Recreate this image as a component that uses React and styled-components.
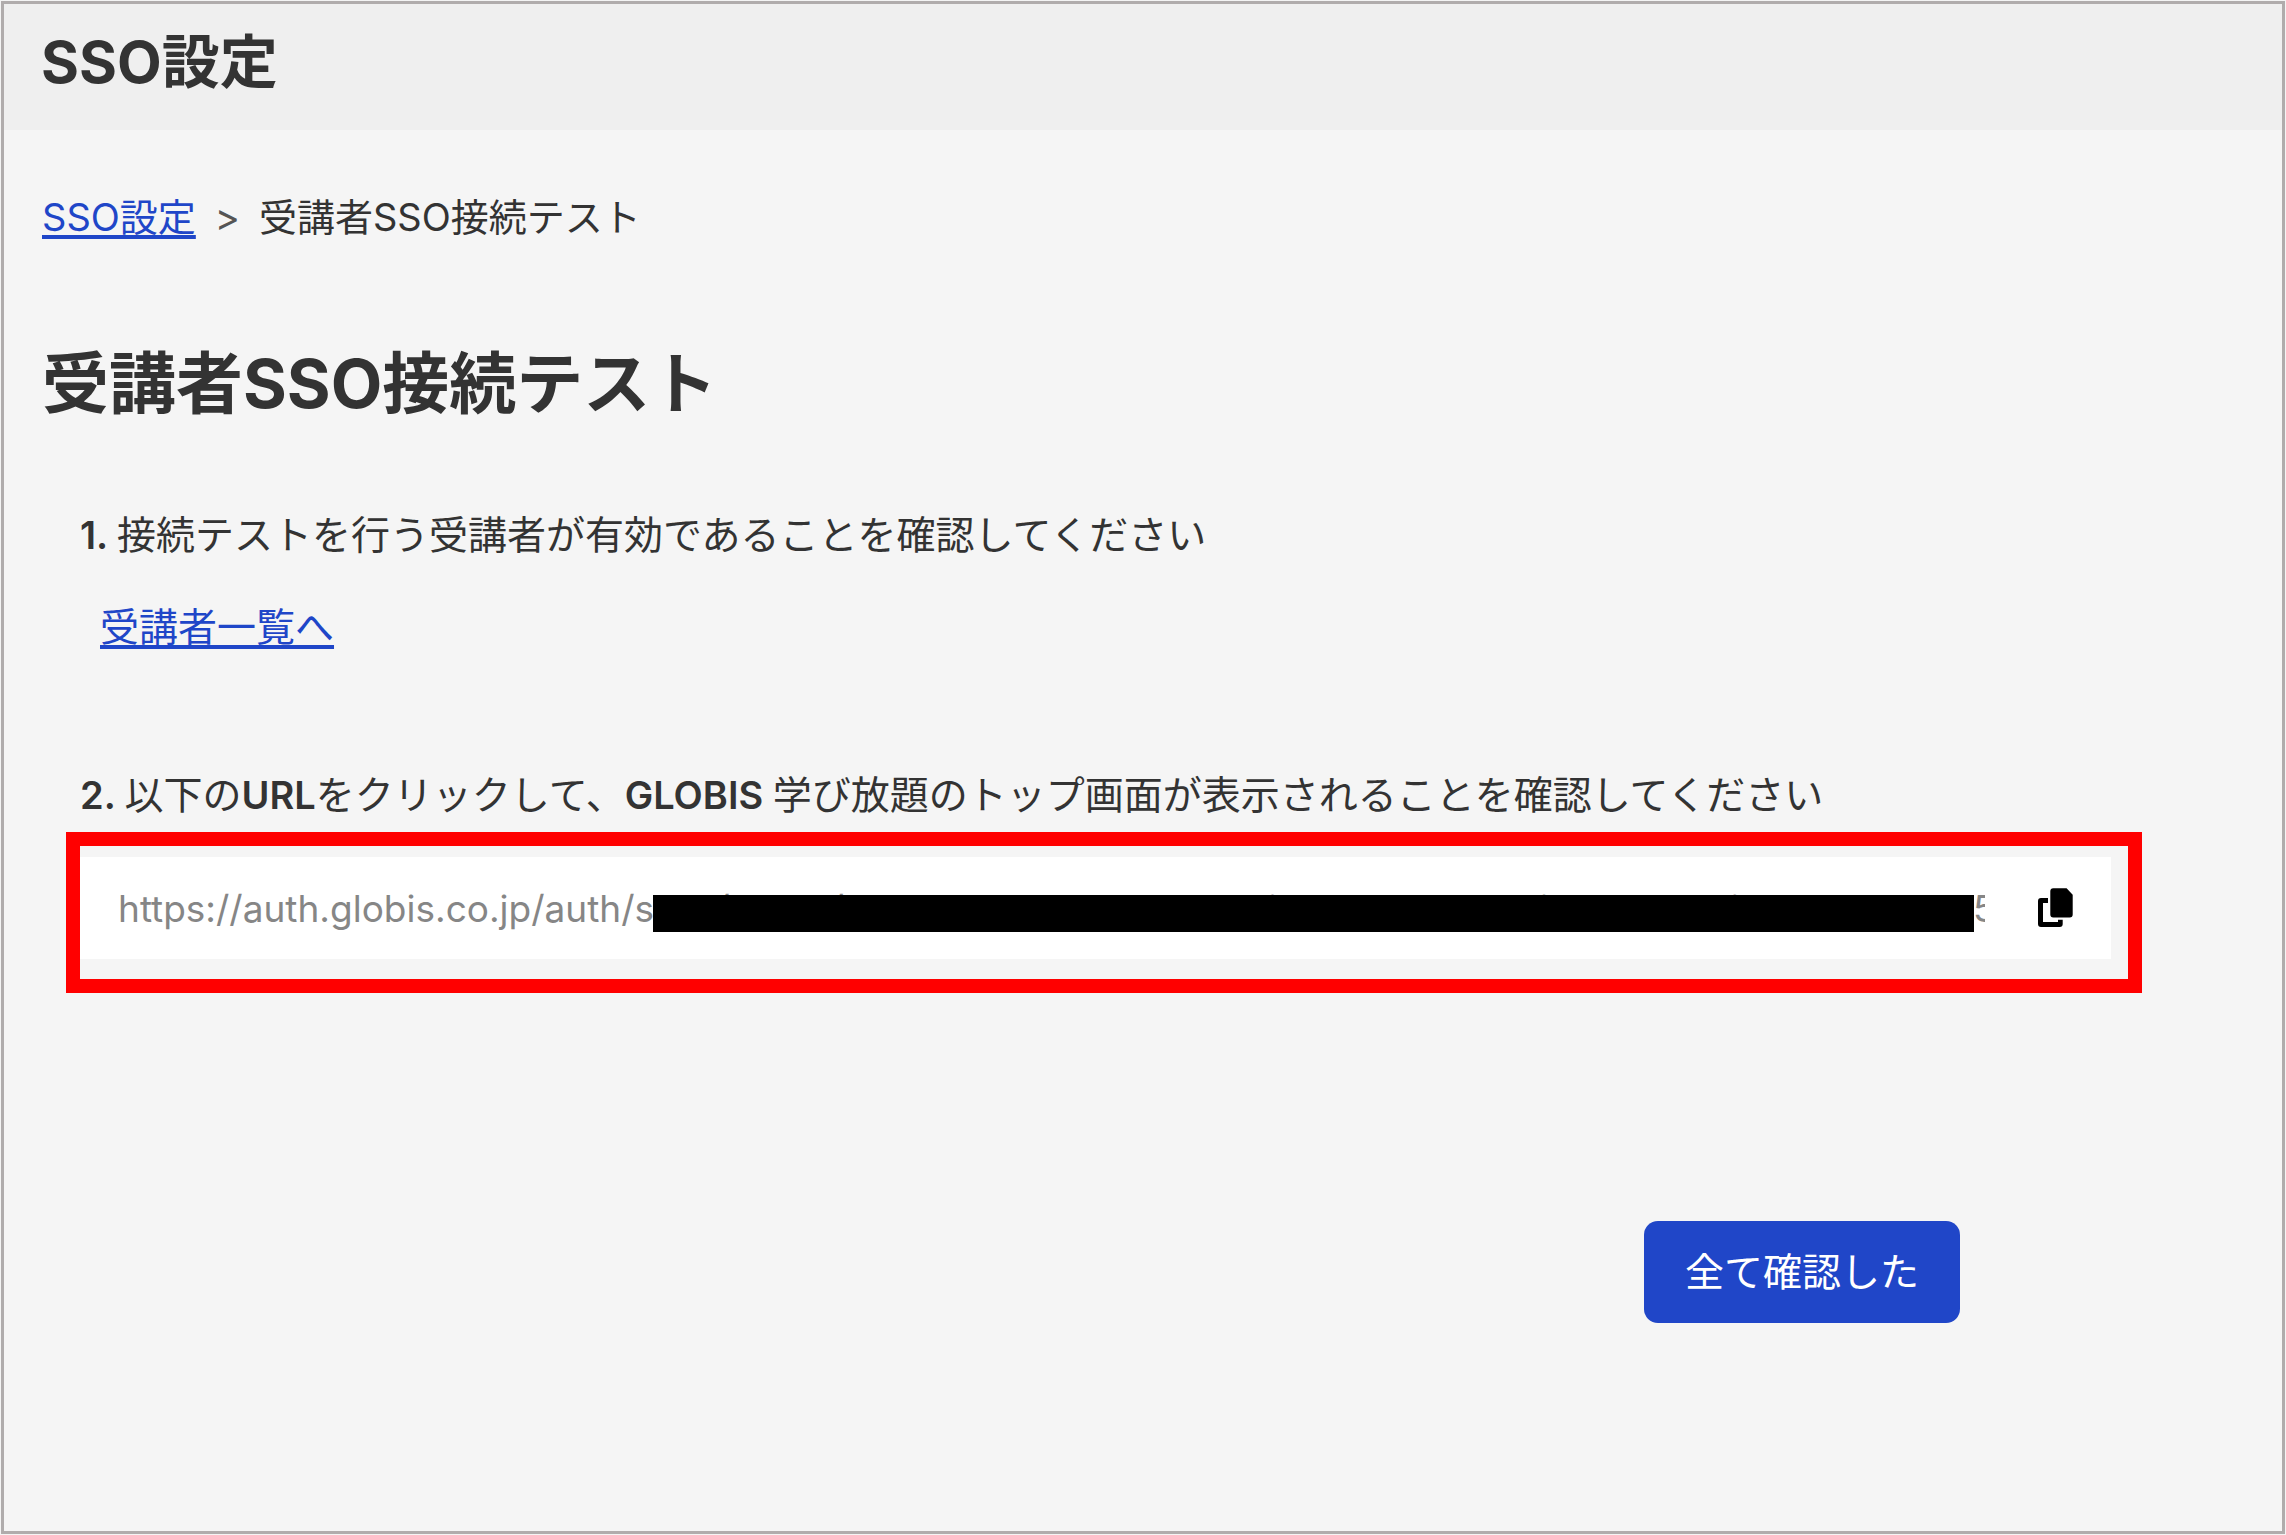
import React from 'react'
import styled, { createGlobalStyle } from 'styled-components'

const GlobalStyle = createGlobalStyle`
  * {
    box-sizing: border-box;
  }

  body {
    margin: 0;
    background: #f4f4f4;
    color: #333;
    font-family: Inter, 'Noto Sans CJK JP', sans-serif;
    font-size: 39px;
    line-height: 58px;
  }
`

const Page = styled('div')`
  min-height: 100vh;
  padding: 1px;
  display: flex;
`

const Frame = styled('div')`
  flex: 1;
  min-width: 0;
  border: 3px solid #b0acac;
  background: #f5f5f5;
`

const Header = styled('header')`
  padding: 16px 37px 26px;
  background: #efefef;
  font-size: 58px;
  font-weight: 700;
  line-height: 84px;
`

const Main = styled('main')`
  padding: 58px 38px;
`

const Breadcrumb = styled('nav')`
  display: flex;
  gap: 19px;
  font-size: 38px;
`

const Separator = styled('span')`
  color: #555;
`

const TextLink = styled('a')`
  color: #1f46c8;
  text-decoration: underline;
  text-decoration-thickness: 4px;
  text-underline-offset: 4px;
`

const Title = styled('h1')`
  margin: 87px 0 71px;
  font-size: 67px;
  font-weight: 700;
  line-height: 102px;
`

const Steps = styled('div')`
  display: flex;
  flex-direction: column;
  gap: 110px;
  padding: 0 102px 0 24px;
`

const StepText = styled('p')`
  margin: 0 0 0 14px;
`

const Latin = styled('span')`
  font-size: 38px;
  font-weight: 600;
`

const StepLink = styled('div')`
  margin: 34px 0 0 34px;
`

const Highlight = styled('div')`
  margin-top: 8px;
  padding: 11px 17px 20px 0;
  border: 14px solid #f00;
`

const UrlBox = styled('div')`
  display: flex;
  align-items: center;
  height: 102px;
  padding: 0 38px;
  background: #fff;
`

const UrlField = styled('div')`
  position: relative;
  flex: 1;
  min-width: 0;
  display: flex;
`

const UrlInput = styled('input')`
  width: 100%;
  padding: 2px 0 0;
  border: 0;
  outline: 0;
  background: transparent;
  color: #868686;
  font: inherit;
  font-size: 37px;
`

// covers the tenant specific part of the url
const Redaction = styled('div')`
  position: absolute;
  top: 17px;
  left: 535px;
  right: 11px;
  height: 37px;
  background: #000;
`

const CopyButton = styled('button')`
  display: flex;
  margin-left: 53px;
  padding: 0;
  border: 0;
  background: transparent;
  color: #000;
  cursor: pointer;
`

const Actions = styled('div')`
  display: flex;
  justify-content: flex-end;
  margin-top: 228px;
  padding-right: 284px;
`

const SubmitButton = styled('button')`
  height: 102px;
  padding: 0 41px;
  border: 0;
  border-radius: 14px;
  background: #2046c8;
  color: #fff;
  font: inherit;
  cursor: pointer;
`

const CopyIcon = () => (
  <svg width="35" height="40" viewBox="0 0 35 40" fill="currentColor" aria-hidden="true">
    <path d="M15.3 0.3H28.6L34.7 6.8V26.5a3 3 0 0 1-3 3H15.3a3 3 0 0 1-3-3V3.3a3 3 0 0 1 3-3Z" />
    <path d="M3 10h7v5H5v19h15v-2.200h4.700V36a3 3 0 0 1-3 3H3a3 3 0 0 1-3-3V13a3 3 0 0 1 3-3Z" />
  </svg>
)

const url =
  'https://auth.globis.co.jp/auth/saml/xxxxx/xxxxxxxxxxxxxxxxxxxxxixxxxxxxxxxxxxixxxxxxxxxixxxxxx555555'

export default () => (
  <>
    <GlobalStyle />
    <Page>
      <Frame>
        <Header>SSO設定</Header>
        <Main>
          <Breadcrumb>
            <TextLink href="#sso">SSO設定</TextLink>
            <Separator>&gt;</Separator>
            <span>受講者SSO接続テスト</span>
          </Breadcrumb>
          <Title>受講者SSO接続テスト</Title>
          <Steps>
            <section>
              <StepText>
                <Latin>1. </Latin>接続テストを行う受講者が有効であることを確認してください
              </StepText>
              <StepLink>
                <TextLink href="#students">受講者一覧へ</TextLink>
              </StepLink>
            </section>
            <section>
              <StepText>
                <Latin>2. </Latin>以下の<Latin>URL</Latin>をクリックして、<Latin>GLOBIS </Latin>
                学び放題のトップ画面が表示されることを確認してください
              </StepText>
              <Highlight>
                <UrlBox>
                  <UrlField>
                    <UrlInput type="text" readOnly value={url} aria-label="URL" />
                    <Redaction />
                  </UrlField>
                  <CopyButton type="button" aria-label="コピー">
                    <CopyIcon />
                  </CopyButton>
                </UrlBox>
              </Highlight>
            </section>
          </Steps>
          <Actions>
            <SubmitButton type="button">全て確認した</SubmitButton>
          </Actions>
        </Main>
      </Frame>
    </Page>
  </>
)
